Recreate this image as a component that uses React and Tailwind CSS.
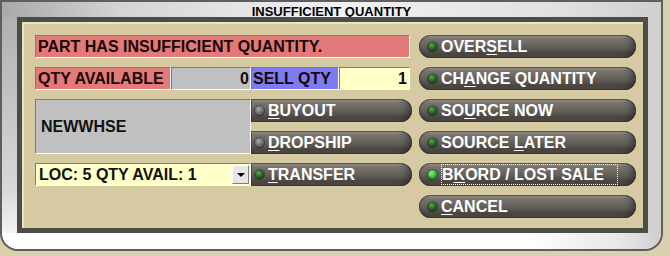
import React from 'react';

const font = { fontFamily: '"Liberation Sans", Arial, sans-serif' };

function Led({ tone = 'dark' }) {
  const tones = {
    dark: 'bg-[radial-gradient(circle_at_40%_35%,#5aa55a,#1a5c1a_55%,#0b2c0b)]',
    gray: 'bg-[radial-gradient(circle_at_40%_35%,#a8a8a8,#6a6a6a_55%,#3e3e3e)]',
    lit: 'bg-[radial-gradient(circle_at_40%_35%,#8cf08c,#2fb42f_55%,#136a13)]',
  };
  return (
    <span className={`block w-[9px] h-[9px] shrink-0 rounded-full shadow-[0_0_0_1px_rgba(0,0,0,0.35)] ${tones[tone]}`} />
  );
}

function Btn({ pre = '', u, post = '', tone = 'dark', side = false, focus = false }) {
  const shape = side ? 'rounded-l-[3px] rounded-r-full pl-[4px] gap-[4px] w-[161px]' : 'rounded-full pl-[9px] gap-[4px] w-[217px]';
  const label = (
    <span>
      {pre}
      <span className="underline underline-offset-2">{u}</span>
      {post}
    </span>
  );
  return (
    <button
      className={`flex items-center h-[23px] shrink-0 text-left text-[16px] font-bold text-white leading-[23px] bg-[linear-gradient(to_bottom,#a9a49e_0%,#7c7670_18%,#655f5a_50%,#4b4642_82%,#57524d_100%)] shadow-[inset_0_0_0_1px_rgba(45,41,38,0.55),inset_-5px_0_6px_rgba(0,0,0,0.3)] ${shape}`}
    >
      <Led tone={tone} />
      {focus ? (
        <span className="outline outline-1 outline-dotted outline-white -outline-offset-1 px-[1px] leading-[21px] w-[177px] whitespace-nowrap">{label}</span>
      ) : (
        <span className="whitespace-nowrap">{label}</span>
      )}
    </button>
  );
}

const sunken = 'border border-t-[#7d7d7d] border-l-[#7d7d7d] border-b-white border-r-white';

export default function App() {
  return (
    <div className="w-[670px] h-[256px] bg-[#d9d0ad] overflow-hidden" style={font}>
      <div className="w-[663px] h-[251px] flex flex-col overflow-hidden border-2 border-[#5e5e5e] rounded-b-[18px] bg-[linear-gradient(to_right,#a9a9a9,#d4d4d4_18%,#f2f2f2_50%,#e0e0e0_85%,#cfcfcf)]">
        <div className="h-[15px] shrink-0 text-center text-[13px] font-bold leading-[19px] text-black">INSUFFICIENT QUANTITY</div>
        <div className="flex shrink-0">
          <div className="w-[15px] shrink-0 bg-[linear-gradient(to_bottom,#b0b0b0,#d8d8d8_80%,#f4f4f4)]" />
          <div className="w-[631px] h-[216px] shrink-0 border-[5px] border-[#4c4c48] bg-[#d5caa2] shadow-[inset_2px_2px_0_#ece3c4]">
            <div className="flex gap-[7px] pl-[13px] pt-[13px]">
              <div className="flex flex-col gap-[9px] w-[377px]">
                <div className={`h-[23px] w-[375px] bg-[#e27a7a] ${sunken} text-[16px] font-bold leading-[21px] pl-[2px] text-[#1a0505] whitespace-nowrap`}>
                  PART HAS INSUFFICIENT QUANTITY.
                </div>
                <div className="flex h-[23px] w-[375px] text-[16px] font-bold leading-[21px] text-[#1a0505] whitespace-nowrap">
                  <div className={`w-[136px] bg-[#e27a7a] ${sunken} pl-[2px]`}>QTY AVAILABLE</div>
                  <div className={`w-[80px] bg-[#c0c0c0] ${sunken} text-right pr-[1px]`}>0</div>
                  <div className={`w-[88px] bg-[#7b7bf2] ${sunken} pl-[1px]`}>SELL QTY</div>
                  <div className={`w-[71px] bg-[#ffffc8] ${sunken} text-right pr-[2px]`}>1</div>
                </div>
                <div className="flex">
                  <div className={`w-[216px] h-[55px] bg-[#c0c0c0] ${sunken} flex items-center pl-[5px] text-[16px] font-bold text-[#111]`}>
                    NEWWHSE
                  </div>
                  <div className="flex flex-col gap-[9px]">
                    <Btn u="B" post="UYOUT" tone="gray" side />
                    <Btn u="D" post="ROPSHIP" tone="gray" side />
                  </div>
                </div>
                <div className="flex">
                  <div className={`w-[216px] h-[23px] bg-[#ffffc8] ${sunken} flex items-center justify-between pl-[3px] pr-[1px] text-[16px] font-bold text-[#111] whitespace-nowrap`}>
                    <span>LOC: 5 QTY AVAIL: 1</span>
                    <span className="w-[17px] h-[19px] flex items-center justify-center bg-[#e6e6e6] border border-t-white border-l-white border-b-[#7d7d7d] border-r-[#7d7d7d]">
                      <span className="w-0 h-0 border-l-[4px] border-r-[4px] border-t-[4px] border-l-transparent border-r-transparent border-t-black" />
                    </span>
                  </div>
                  <Btn u="T" post="RANSFER" side />
                </div>
              </div>
              <div className="flex flex-col gap-[9px]">
                <Btn pre="OVER" u="S" post="ELL" />
                <Btn pre="CH" u="A" post="NGE QUANTITY" />
                <Btn pre="SO" u="U" post="RCE NOW" />
                <Btn pre="SOURCE " u="L" post="ATER" />
                <Btn pre="B" u="K" post="ORD / LOST SALE" tone="lit" focus />
                <Btn u="C" post="ANCEL" />
              </div>
            </div>
          </div>
        </div>
        <div className="h-[16px] shrink-0 bg-[linear-gradient(to_right,#ffffff,#ffffff_80%,#e6e6e6_94%,#cfcfcf)]" />
      </div>
    </div>
  );
}
